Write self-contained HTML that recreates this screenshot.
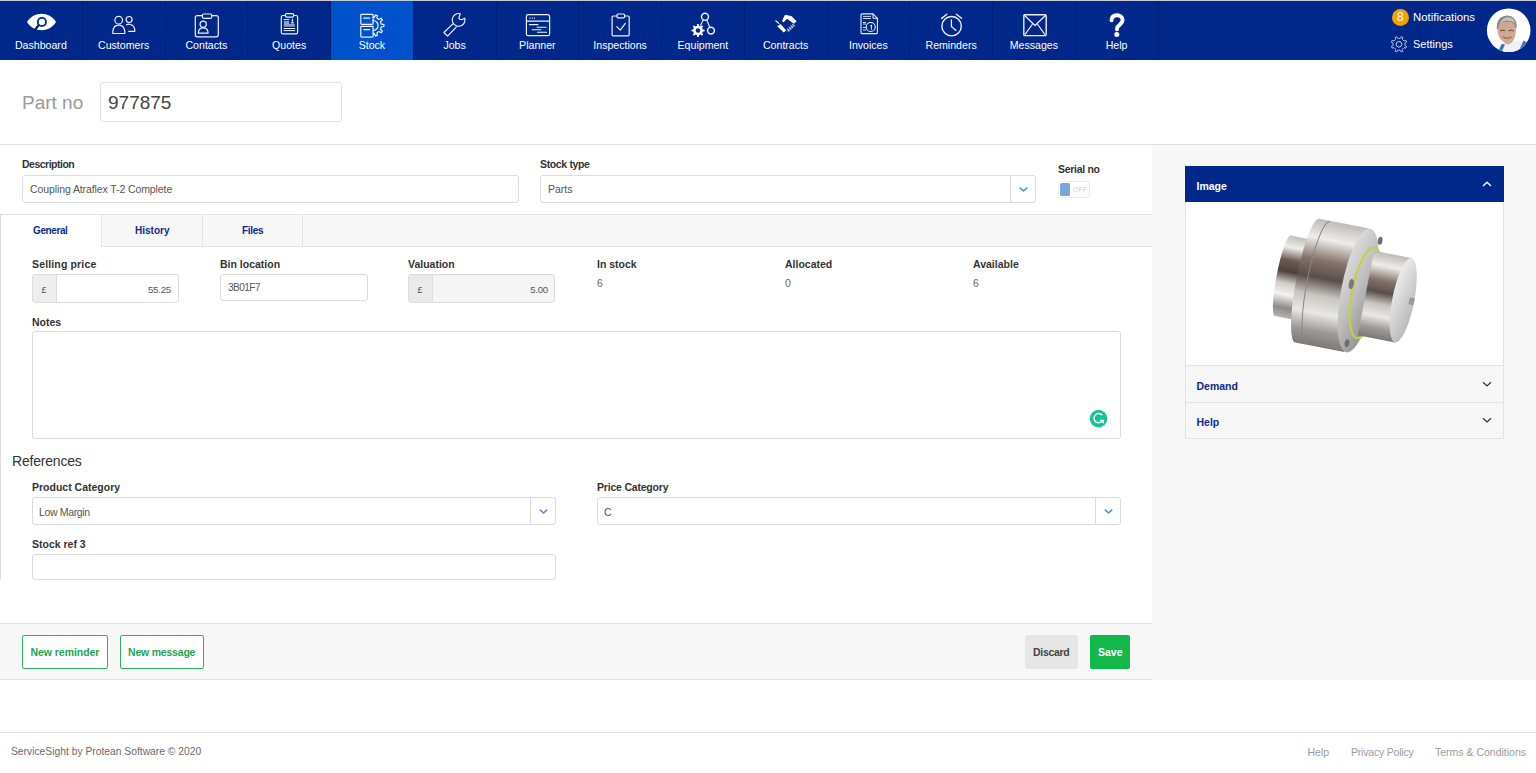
<!DOCTYPE html>
<html><head><meta charset="utf-8">
<style>
*{box-sizing:border-box;margin:0;padding:0}
html,body{width:1536px;height:773px;overflow:hidden;background:#fff;font-family:"Liberation Sans",sans-serif;color:#333}
.a{position:absolute}
.t{position:absolute;line-height:1;white-space:nowrap}
.b{font-weight:bold}
#nav{position:absolute;left:0;top:0;width:1536px;height:60px;background:#00288a;border-top:1px solid #c6c9d6}
.ni{position:absolute;top:0;height:59px;width:82.75px;border-right:1px solid #001f78}
.ni .lbl{position:absolute;left:0;right:0;top:39px;text-align:center;color:#fff;font-size:10.6px;line-height:1}
.ni svg{position:absolute;left:0;top:0}
.inp{position:absolute;background:#fff;border:1px solid #dcdcdc;border-radius:3px}
.lab{position:absolute;line-height:1;white-space:nowrap;font-weight:bold;font-size:10.5px;color:#333}
.val{position:absolute;line-height:1;white-space:nowrap;font-size:10.5px;color:#555}
</style></head><body>

<!-- NAV -->
<div id="nav">
<div class="ni" style="left:0.00px;"><div class="lbl">Dashboard</div></div>
<div class="ni" style="left:82.75px;"><div class="lbl">Customers</div></div>
<div class="ni" style="left:165.50px;"><div class="lbl">Contacts</div></div>
<div class="ni" style="left:248.25px;"><div class="lbl">Quotes</div></div>
<div class="ni" style="left:331.00px;background:#0052cc;"><div class="lbl">Stock</div></div>
<div class="ni" style="left:413.75px;"><div class="lbl">Jobs</div></div>
<div class="ni" style="left:496.50px;"><div class="lbl">Planner</div></div>
<div class="ni" style="left:579.25px;"><div class="lbl">Inspections</div></div>
<div class="ni" style="left:662.00px;"><div class="lbl">Equipment</div></div>
<div class="ni" style="left:744.75px;"><div class="lbl">Contracts</div></div>
<div class="ni" style="left:827.50px;"><div class="lbl">Invoices</div></div>
<div class="ni" style="left:910.25px;"><div class="lbl">Reminders</div></div>
<div class="ni" style="left:993.00px;"><div class="lbl">Messages</div></div>
<div class="ni" style="left:1075.75px;"><div class="lbl">Help</div></div>
<svg class="a" style="left:0;top:-1px" width="1536" height="60" viewBox="0 0 1536 60">
<g fill="none" stroke="#eef1f8" stroke-width="1.2" stroke-linecap="round" stroke-linejoin="round">
<!-- eye -->
<path d="M27,22 C33.5,11 49.5,11 56,22 C49.5,33 33.5,33 27,22 Z" fill="#fff" stroke="none"/>
<circle cx="41.9" cy="22" r="4.1" stroke="#00288a" stroke-width="1.9"/>
<path d="M38.7,25 L34.6,30.6" stroke="#00288a" stroke-width="2.3" stroke-linecap="butt"/>
<!-- customers -->
<circle cx="118.7" cy="20.2" r="3.8" stroke-width="1.2"/>
<path d="M112.8,33.5 L112.8,32 Q113.2,25.2 118.7,25.2 Q124.3,25.2 124.8,32 L124.8,33.5 Z" stroke-width="1.2"/>
<circle cx="129.1" cy="19.5" r="3" stroke-width="1.2"/>
<path d="M126.5,24.8 Q128.5,23.8 130.5,24.5 Q134.6,25.5 134.8,30.5 L134.8,31.3 L128.7,31.3" stroke-width="1.2"/>
<!-- contacts -->
<rect x="195.3" y="15.6" width="23" height="21.2" rx="2"/>
<rect x="202.4" y="14" width="9.4" height="4.3" rx="1.2" fill="#00288a"/>
<circle cx="203.2" cy="24.2" r="3.1"/>
<path d="M198.3,33.2 Q198.3,27.8 203.2,27.8 Q208.1,27.8 208.1,33.2 Z"/>
<!-- quotes -->
<rect x="281.3" y="15.5" width="16.3" height="18.4" rx="1.6"/>
<rect x="285.3" y="13.6" width="8.4" height="3.6" rx="1.4" fill="#00288a"/>
<path d="M284,19.6 H289 M284,28.5 H294.7 M284,30.6 H294.7" stroke-width="1"/>
<path d="M283.9,21 H289.2 V24.1 H294.8 V26.8 H283.9 Z" fill="#fff" fill-opacity="0.55" stroke="none"/>
<path d="M292.3,18.6 Q293.4,18.9 293.2,20.2 L292.9,21 L294.2,23.6 H290.7 L291.9,21 Q290.9,20.6 292.3,18.6 Z" fill="#fff" fill-opacity="0.8" stroke="none"/>
<!-- stock -->
<rect x="360.8" y="14.4" width="12.3" height="10" rx="0.8"/>
<rect x="360.8" y="26.3" width="12.3" height="10.8" rx="0.8"/>
<path d="M363.8,18.2 H369.6 M363.8,29.6 H369.6"/>
<path d="M373.1,20.5 A5 5 0 0 1 373.1,30.5" stroke-width="1.2"/>
<path d="M373.10,17.20L374.40,17.30L375.44,14.96L377.41,15.60L376.87,18.10L378.97,19.63L381.19,18.34L382.41,20.02L380.50,21.73L381.30,24.20L383.85,24.46L383.85,26.54L381.30,26.80L380.50,29.27L382.41,30.98L381.19,32.66L378.97,31.37L376.87,32.90L377.41,35.40L375.44,36.04L374.40,33.70L373.10,33.80" stroke-width="1.2" stroke-linejoin="miter"/>
<!-- jobs -->
<path d="M464.78,18.24 A6.4 6.4 0 1 1 460.26,13.72 L458.9,17.6 Q459.2,19.9 462.2,19.5 Z" stroke-width="1.2"/>
<path d="M452.9,23.9 L443.9,32.5 L447.6,36.2 L456.2,27.2" stroke-width="1.2"/>
<!-- planner -->
<rect x="526.4" y="14.6" width="23.2" height="21.1" rx="1.8"/>
<path d="M526.4,21.2 H549.6"/>
<path d="M529.3,24.6 H538 M537,27.3 H546 M532.3,29.7 H541 M537.5,32.2 H546.5" stroke-width="1.1"/>
<circle cx="530" cy="18.1" r="0.7" fill="#fff" stroke="none"/><circle cx="532.2" cy="18.1" r="0.7" fill="#fff" stroke="none"/><circle cx="534.4" cy="18.1" r="0.7" fill="#fff" stroke="none"/>
<!-- inspections -->
<rect x="612.1" y="16" width="17.1" height="19.8" rx="1"/>
<rect x="617" y="14" width="7.6" height="3.8" rx="1" fill="#00288a"/>
<path d="M616.8,26.6 L620.3,30.2 L625.3,23.3"/>
<!-- equipment -->
<circle cx="705" cy="16.8" r="3.5" stroke-width="1.4"/>
<path d="M703.2,20 L700.6,25.2 M706.8,20 L709.6,27" stroke-width="1.1"/>
<circle cx="711" cy="30.6" r="3.4" stroke-width="1.5"/>
<!-- reminders -->
<circle cx="951.6" cy="26.2" r="9.7" stroke-width="1.4"/>
<path d="M941.6,18.4 L946.8,14.3 M956.4,14.3 L961.6,18.2" stroke-width="1.4"/>
<path d="M951.4,19.8 V26.6 L956,30.4" stroke-width="1.3"/>
<!-- messages -->
<rect x="1023.8" y="14.7" width="22.4" height="20.9" rx="1.2" stroke-width="1.4"/>
<path d="M1024.3,15.3 L1035,25.5 L1045.7,15.3 M1025.3,34.2 L1032.2,24.5 M1044.6,34.2 L1037.7,24.5" stroke-width="1.2"/>
<!-- invoices -->
<path d="M862,13.9 H873 L877.4,18.3 V32.6 Q877.4,33.6 876.4,33.6 H862 Q861,33.6 861,32.6 V14.9 Q861,13.9 862,13.9 Z" stroke-width="1.1"/>
<path d="M873,14 V18.3 H877.4" stroke-width="1"/>
<path d="M863.3,16.4 H870.5 M863.3,18.5 H870.5 M863.3,22.5 H865.5 M863.3,24 H865.5 M863.3,27.5 H865.5 M863.3,30 H865.5" stroke-width="0.9"/>
<circle cx="870.7" cy="27" r="4.5" stroke-width="1.1"/>
<path d="M870.6,25.6 L871.4,25 V29.3" stroke-width="1"/>
</g>
<!-- equipment gear filled -->
<path fill="#fff" d="M702.81,29.54L704.55,29.67L704.55,31.33L702.81,31.46L702.07,33.22L703.22,34.55L702.05,35.72L700.72,34.57L698.96,35.31L698.83,37.05L697.17,37.05L697.04,35.31L695.28,34.57L693.95,35.72L692.78,34.55L693.93,33.22L693.19,31.46L691.45,31.33L691.45,29.67L693.19,29.54L693.93,27.78L692.78,26.45L693.95,25.28L695.28,26.43L697.04,25.69L697.17,23.95L698.83,23.95L698.96,25.69L700.72,26.43L702.05,25.28L703.22,26.45L702.07,27.78Z"/>
<circle cx="698" cy="30.5" r="2.3" fill="#00288a"/>
<!-- contracts handshake -->
<path fill="#fff" d="M782,21.2 L784.5,15.6 Q785.2,14.6 786.5,15 L791.7,16.2 L796.6,21.2 L793.9,23.8 L787,18.7 L783.6,22.2 Z"/>
<path fill="#fff" d="M777.2,26.3 L780.5,23.9 L786.2,30.3 L783.8,32.6 Z"/>
<path d="M775.5,20.5 L779,23.6" stroke="#fff" stroke-width="1.1" fill="none"/>
<path d="M786.5,30.5 L788.4,32.4 L795.2,25.6 L793,23.9 Z" fill="#fff" opacity="0.35"/>
<path d="M787.2,28.3 L789.2,31.2 M789,26.8 L791,29.6 M790.8,25.3 L792.8,28 M792.5,23.9 L794.4,26.4" stroke="#fff" stroke-width="0.9" opacity="0.85" fill="none"/>
<!-- help -->
<path d="M1111.5,20.3 C1111.7,16.7 1114,15.2 1117,15.2 C1120.4,15.2 1122.7,17.4 1122.7,20.1 C1122.7,23.6 1118.7,24.6 1117.2,27.4 L1117,29.4" fill="none" stroke="#fff" stroke-width="3.9" stroke-linecap="round"/>
<circle cx="1116.8" cy="34.6" r="2.5" fill="#fff"/>
</svg>
<!-- notifications -->
<div class="a" style="left:1391.5px;top:7.7px;width:17.5px;height:17.5px;border-radius:50%;background:#f5a100"></div>
<div class="t" style="left:1391.5px;top:10px;width:17.5px;text-align:center;font-size:12px;color:#fff">8</div>
<div class="t" style="left:1413px;top:10.5px;font-size:11.4px;color:#fff">Notifications</div>
<svg class="a" style="left:1390px;top:34px" width="18" height="18" viewBox="0 0 18 18">
<path d="M14.88,10.47L16.60,11.44L15.89,13.16L13.99,12.63L12.33,14.29L12.86,16.19L11.14,16.90L10.17,15.18L7.83,15.18L6.86,16.90L5.14,16.19L5.67,14.29L4.01,12.63L2.11,13.16L1.40,11.44L3.12,10.47L3.12,8.13L1.40,7.16L2.11,5.44L4.01,5.97L5.67,4.31L5.14,2.41L6.86,1.70L7.83,3.42L10.17,3.42L11.14,1.70L12.86,2.41L12.33,4.31L13.99,5.97L15.89,5.44L16.60,7.16L14.88,8.13Z" fill="none" stroke="#c4cde6" stroke-width="0.9"/>
<circle cx="9" cy="9.3" r="2.8" fill="none" stroke="#c4cde6" stroke-width="1"/>
</svg>
<div class="t" style="left:1413px;top:38px;font-size:11px;color:#fff">Settings</div>
<svg class="a" style="left:1484px;top:4.3px" width="50" height="50" viewBox="0 0 50 50">
<defs><clipPath id="cc"><circle cx="24.7" cy="25.25" r="21.8"/></clipPath>
<radialGradient id="face" cx="0.45" cy="0.45" r="0.6"><stop offset="0" stop-color="#d7b09a"/><stop offset="1" stop-color="#a98270"/></radialGradient></defs>
<circle cx="24.7" cy="25.25" r="21.8" fill="#fff"/>
<g clip-path="url(#cc)">
<path d="M10,50 L16,40 Q22,36.5 25,38 Q29,37 34,35 L42,39 L46,50 Z" fill="#f1f1f1"/>
<path d="M12.5,50 L17.8,38.8 L21,39.6 L16.2,50 Z" fill="#3c78b8"/>
<path d="M33,50 L39.5,35.5 L43.5,37.5 L37,50 Z" fill="#3c78b8"/>
<path d="M18,31 Q18.5,38 23,39.5 Q28,39.8 30.5,33 L30.5,28 L18,28 Z" fill="#c9b2a6"/>
<path d="M13.6,23 Q13.3,33.5 20,37 Q24.5,39 28,36 Q32.5,31.5 32,22 Q31.5,15 23,15 Q14,15.5 13.6,23 Z" fill="#cfa792"/>
<path d="M16,26 Q18,24.5 21,25.8 M24.5,25.8 Q27.5,24.5 29.8,26" stroke="#5e4238" stroke-width="1" fill="none"/>
<path d="M19,32 Q23,34.5 27.5,32" stroke="#8a6256" stroke-width="1.1" fill="none"/>
<path d="M12.8,24 Q12,11.5 23,10.5 Q32.5,10.5 32.8,21.5 L31.8,24 Q31,17.8 27,17 Q22,16.5 17.5,17.5 Q14.5,19 14,24.5 Z" fill="#8b8987"/>
<path d="M15.5,19 Q18,12.5 24,12.2 Q30,12.5 31.2,18 Q27,15.2 23,15.4 Q19,15.6 15.5,19 Z" fill="#c4c3c2"/>
</g>
</svg>
</div>

<!-- PART NO HEADER -->
<div class="t" style="left:22px;top:93px;font-size:19px;color:#9a9a9a">Part no</div>
<div class="inp" style="left:100px;top:82px;width:242px;height:40px;border-color:#e2e2e2"></div>
<div class="t" style="left:108px;top:93px;font-size:19px;color:#444">977875</div>
<div class="a" style="left:0;top:144px;width:1536px;height:1px;background:#e0e0e0"></div>

<!-- SIDEBAR BG -->
<div class="a" style="left:1152px;top:145px;width:384px;height:535px;background:#f7f7f7"></div>

<!-- DESCRIPTION ROW -->
<div class="lab" style="left:22px;top:158.5px;letter-spacing:-0.5px">Description</div>
<div class="inp" style="left:22px;top:175px;width:497px;height:28px"></div>
<div class="val" style="left:30px;top:184px;letter-spacing:-0.1px">Coupling Atraflex T-2 Complete</div>

<div class="lab" style="left:540px;top:158.5px;letter-spacing:-0.35px">Stock type</div>
<div class="inp" style="left:540px;top:175px;width:496px;height:28px"></div>
<div class="a" style="left:1010px;top:176px;width:1px;height:26px;background:#dcdcdc"></div>
<div class="val" style="left:548px;top:184px">Parts</div>

<div class="lab" style="left:1058px;top:164px;letter-spacing:-0.3px">Serial no</div>

<!-- TABS -->
<div class="a" style="left:0;top:214px;width:1152px;height:33px;background:#f7f7f7;border-top:1px solid #e6e6e6;border-bottom:1px solid #e6e6e6"></div>
<div class="a" style="left:0;top:214px;width:101px;height:33px;background:#fff;border-top:1px solid #e3e3e3;border-left:1px solid #ddd"></div>
<div class="a" style="left:101px;top:214px;width:1px;height:32px;background:#e3e3e3"></div>
<div class="a" style="left:202px;top:214px;width:1px;height:32px;background:#e3e3e3"></div>
<div class="a" style="left:302px;top:214px;width:1px;height:32px;background:#e3e3e3"></div>
<div class="t b" style="left:33px;top:226px;font-size:10px;color:#0d2a8c;letter-spacing:-0.4px">General</div>
<div class="t b" style="left:135px;top:226px;font-size:10px;color:#0d2a8c">History</div>
<div class="t b" style="left:242px;top:226px;font-size:10px;color:#0d2a8c;letter-spacing:-0.3px">Files</div>
<div class="a" style="left:0;top:246px;width:1px;height:334px;background:#ddd"></div>


<!-- SERIAL TOGGLE -->
<div class="a" style="left:1058px;top:181px;width:32px;height:17px;border:1px solid #ececec;border-radius:2px;background:#fff"></div>
<div class="a" style="left:1060px;top:182.5px;width:10px;height:13px;background:#7ba6dd;border-radius:1.5px"></div>
<div class="t" style="left:1073px;top:186px;font-size:7px;color:#d0d0d0">OFF</div>
<!-- select chevron desc -->
<svg class="a" style="left:1018px;top:186px" width="11" height="7" viewBox="0 0 11 7"><path d="M1.8,1.6 L5.5,5 L9.2,1.6" fill="none" stroke="#4a8fe0" stroke-width="1.6"/></svg>

<!-- GENERAL FIELDS -->
<div class="lab" style="left:32px;top:259px;letter-spacing:0.15px">Selling price</div>
<div class="inp" style="left:32px;top:274px;width:147px;height:29px;background:#fff"></div>
<div class="a" style="left:33px;top:275px;width:24px;height:27px;background:#eee;border-right:1px solid #ddd;border-radius:2px 0 0 2px"></div>
<div class="val" style="left:41.5px;top:285.5px;font-size:9px;color:#555">£</div>
<div class="val" style="left:120px;top:284.6px;width:51px;text-align:right;font-size:9.6px;letter-spacing:-0.2px">55.25</div>

<div class="lab" style="left:220px;top:259px">Bin location</div>
<div class="inp" style="left:220px;top:274px;width:148px;height:27px"></div>
<div class="val" style="left:228px;top:283.3px;font-size:10px;letter-spacing:-0.5px">3B01F7</div>

<div class="lab" style="left:408px;top:259px">Valuation</div>
<div class="inp" style="left:408px;top:274px;width:147px;height:29px;background:#f5f5f5"></div>
<div class="a" style="left:409px;top:275px;width:24px;height:27px;background:#eaeaea;border-right:1px solid #ddd;border-radius:2px 0 0 2px"></div>
<div class="val" style="left:417.5px;top:285.5px;font-size:9px;color:#555">£</div>
<div class="val" style="left:496px;top:284.6px;width:52px;text-align:right;font-size:9.6px;letter-spacing:-0.2px">5.00</div>

<div class="lab" style="left:597px;top:259px">In stock</div>
<div class="val" style="left:597px;top:278px;font-size:10.5px;color:#666">6</div>
<div class="lab" style="left:785px;top:259px">Allocated</div>
<div class="val" style="left:785px;top:278px;font-size:10.5px;color:#666">0</div>
<div class="lab" style="left:973px;top:259px">Available</div>
<div class="val" style="left:973px;top:278px;font-size:10.5px;color:#666">6</div>

<div class="lab" style="left:32px;top:317px">Notes</div>
<div class="inp" style="left:32px;top:331px;width:1089px;height:108px"></div>
<svg class="a" style="left:1089px;top:409px" width="19" height="19" viewBox="0 0 19 19">
<circle cx="9.5" cy="9.6" r="8.8" fill="#15c39a"/>
<path d="M13.2,6.3 A4.6 4.6 0 1 0 13.6,11.4" fill="none" stroke="#fff" stroke-width="1.4"/>
<path d="M10.9,11.3 H14.2 V14.4" fill="none" stroke="#fff" stroke-width="1.3"/>
</svg>

<!-- REFERENCES -->
<div class="t" style="left:12px;top:454px;font-size:14px;color:#333;letter-spacing:-0.2px">References</div>
<div class="lab" style="left:32px;top:482px">Product Category</div>
<div class="inp" style="left:32px;top:497px;width:524px;height:28px"></div>
<div class="a" style="left:530px;top:498px;width:1px;height:26px;background:#dcdcdc"></div>
<svg class="a" style="left:538px;top:508px" width="11" height="7" viewBox="0 0 11 7"><path d="M1.8,1.6 L5.5,5 L9.2,1.6" fill="none" stroke="#4a8fe0" stroke-width="1.6"/></svg>
<div class="val" style="left:39px;top:507px;letter-spacing:-0.35px">Low Margin</div>

<div class="lab" style="left:597px;top:482px;letter-spacing:-0.2px">Price Category</div>
<div class="inp" style="left:597px;top:497px;width:524px;height:28px"></div>
<div class="a" style="left:1095px;top:498px;width:1px;height:26px;background:#dcdcdc"></div>
<svg class="a" style="left:1103px;top:508px" width="11" height="7" viewBox="0 0 11 7"><path d="M1.8,1.6 L5.5,5 L9.2,1.6" fill="none" stroke="#4a8fe0" stroke-width="1.6"/></svg>
<div class="val" style="left:604px;top:507px">C</div>

<div class="lab" style="left:32px;top:539px">Stock ref 3</div>
<div class="inp" style="left:32px;top:554px;width:524px;height:26px"></div>

<!-- ACTION BAR -->
<div class="a" style="left:0;top:623px;width:1152px;height:57px;background:#f7f7f7;border-top:1px solid #e3e3e3;border-bottom:1px solid #e3e3e3"></div>
<div class="a" style="left:21.5px;top:635px;width:86.5px;height:33.5px;border:1.3px solid #2db35b;border-radius:2px;background:#fff"></div>
<div class="t b" style="left:30.5px;top:647.2px;font-size:10.5px;color:#22a552;letter-spacing:-0.05px">New reminder</div>
<div class="a" style="left:120px;top:635px;width:84px;height:33.5px;border:1.3px solid #2db35b;border-radius:2px;background:#fff"></div>
<div class="t b" style="left:128px;top:647.2px;font-size:10.5px;color:#22a552;letter-spacing:-0.2px">New message</div>
<div class="a" style="left:1025px;top:635px;width:53px;height:33.5px;background:#e6e6e6;border-radius:2px"></div>
<div class="t b" style="left:1033px;top:647.2px;font-size:10.5px;color:#444;letter-spacing:-0.3px">Discard</div>
<div class="a" style="left:1089.5px;top:635px;width:40.5px;height:33.5px;background:#13b84b;border-radius:2px"></div>
<div class="t b" style="left:1098px;top:647.2px;font-size:10.5px;color:#fff">Save</div>

<!-- FOOTER -->
<div class="a" style="left:0;top:732px;width:1536px;height:1px;background:#e3e3e3"></div>
<div class="t" style="left:11px;top:746.8px;font-size:10.3px;color:#6a6a6a;letter-spacing:0px">ServiceSight by Protean Software © 2020</div>
<div class="t" style="left:1307.5px;top:746.8px;font-size:10.5px;color:#9a9a9a">Help</div>
<div class="t" style="left:1351px;top:746.8px;font-size:10.5px;color:#9a9a9a;letter-spacing:-0.2px">Privacy Policy</div>
<div class="t" style="left:1435px;top:746.8px;font-size:10.5px;color:#9a9a9a">Terms &amp; Conditions</div>

<!-- SIDE PANEL -->
<div class="a" style="left:1185px;top:166px;width:319px;height:37px;background:#00288a"></div>
<div class="t b" style="left:1196.5px;top:181px;font-size:10.5px;color:#fff">Image</div>
<svg class="a" style="left:1481px;top:180px" width="12" height="8" viewBox="0 0 12 8"><path d="M2,6 L6,2.2 L10,6" fill="none" stroke="#fff" stroke-width="1.4"/></svg>
<div class="a" style="left:1185px;top:202px;width:319px;height:237px;border:1px solid #e3e3e3;border-top:none;background:#f7f7f7"></div>
<div class="a" style="left:1186px;top:202px;width:317px;height:164px;background:#fff;border-bottom:1px solid #e3e3e3"></div>
<svg class="a" style="left:1186px;top:203px" width="317" height="163" viewBox="1186 203 317 163">
<defs>
<linearGradient id="met" x1="0" y1="0" x2="0" y2="1">
<stop offset="0" stop-color="#c2bebb"/><stop offset="0.14" stop-color="#efedea"/><stop offset="0.3" stop-color="#6a5a52"/><stop offset="0.44" stop-color="#4e4340"/><stop offset="0.58" stop-color="#cfcbc7"/><stop offset="0.72" stop-color="#f3f3f3"/><stop offset="0.88" stop-color="#8e8a88"/><stop offset="1" stop-color="#b5b2b0"/>
</linearGradient>
<linearGradient id="met2" x1="0" y1="0" x2="0" y2="1">
<stop offset="0" stop-color="#bdbab8"/><stop offset="0.15" stop-color="#eeedeb"/><stop offset="0.32" stop-color="#85736b"/><stop offset="0.46" stop-color="#5a4e49"/><stop offset="0.6" stop-color="#c9c5c1"/><stop offset="0.74" stop-color="#e9e8e6"/><stop offset="0.88" stop-color="#9d9997"/><stop offset="1" stop-color="#7b7876"/>
</linearGradient>
<linearGradient id="flg" x1="0" y1="0" x2="1" y2="1">
<stop offset="0" stop-color="#e6e6e6"/><stop offset="0.5" stop-color="#bdbdbd"/><stop offset="1" stop-color="#858585"/>
</linearGradient>
<linearGradient id="endc" x1="0" y1="0" x2="1" y2="1">
<stop offset="0" stop-color="#f5f5f5"/><stop offset="1" stop-color="#b0b0b0"/>
</linearGradient>
</defs>
<g transform="translate(0.5,2) rotate(11 1345 286)">
<!-- left hub -->
<path d="M1281,245 H1312 V327 H1281 A6 41 0 0 1 1281,245 Z" fill="url(#met)"/>
<!-- main body -->
<path d="M1306,223 H1356 V349 H1306 A11 63 0 0 1 1306,223 Z" fill="url(#met2)"/>
<path d="M1317,224 A11 62 0 0 0 1317,348" fill="none" stroke="#8d8580" stroke-width="1"/>
<!-- flange face -->
<ellipse cx="1358" cy="286" rx="17" ry="63" fill="url(#flg)"/>
<ellipse cx="1366" cy="287" rx="14" ry="46" fill="none" stroke="#c6cf3a" stroke-width="2"/>
<ellipse cx="1370" cy="233" rx="2.3" ry="4" fill="#6e6e6e"/>
<ellipse cx="1350" cy="281" rx="2.5" ry="5" fill="#7a7a7a"/>
<ellipse cx="1357" cy="340" rx="2.3" ry="4" fill="#6e6e6e"/>
<!-- right hub -->
<path d="M1366,244 H1404 V330 H1366 Z" fill="url(#met2)"/>
<ellipse cx="1404" cy="287" rx="11" ry="43" fill="url(#endc)"/>
<rect x="1410" y="283" width="5" height="7" fill="#9a9a9a"/>
</g>
</svg>
<div class="a" style="left:1186px;top:402px;width:317px;height:1px;background:#e3e3e3"></div>
<div class="t b" style="left:1196.5px;top:380.8px;font-size:10.5px;color:#0d2a8c">Demand</div>
<svg class="a" style="left:1481px;top:380px" width="12" height="8" viewBox="0 0 12 8"><path d="M2,2.2 L6,6 L10,2.2" fill="none" stroke="#333" stroke-width="1.2"/></svg>
<div class="t b" style="left:1196.5px;top:416.5px;font-size:10.5px;color:#0d2a8c">Help</div>
<svg class="a" style="left:1481px;top:416px" width="12" height="8" viewBox="0 0 12 8"><path d="M2,2.2 L6,6 L10,2.2" fill="none" stroke="#333" stroke-width="1.2"/></svg>

</body></html>
